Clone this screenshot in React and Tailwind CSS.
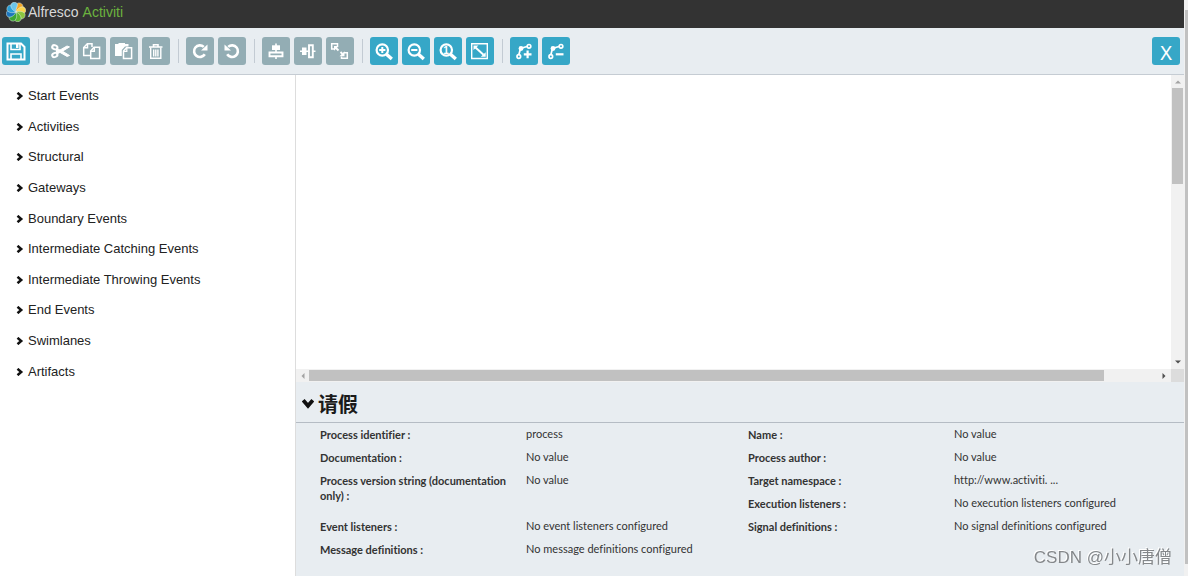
import { useState } from "react";
import clsx from "clsx";

const stencilGroups = [
  "Start Events",
  "Activities",
  "Structural",
  "Gateways",
  "Boundary Events",
  "Intermediate Catching Events",
  "Intermediate Throwing Events",
  "End Events",
  "Swimlanes",
  "Artifacts",
];

const properties = [
  { title: "Process identifier", value: "process" },
  { title: "Name", value: "No value" },
  { title: "Documentation", value: "No value" },
  { title: "Process author", value: "No value" },
  {
    title: "Process version string (documentation only)",
    value: "No value",
    tall: true,
  },
  { title: "Target namespace", value: "http://www.activiti. ..." },
  { title: "Execution listeners", value: "No execution listeners configured" },
  { title: "Event listeners", value: "No event listeners configured" },
  { title: "Signal definitions", value: "No signal definitions configured" },
  { title: "Message definitions", value: "No message definitions configured" },
];

const toolbarGroups = [
  [{ label: "Save", icon: SaveIcon, enabled: true }],
  [
    { label: "Cut", icon: CutIcon },
    { label: "Copy", icon: CopyIcon },
    { label: "Paste", icon: PasteIcon },
    { label: "Delete", icon: TrashIcon },
  ],
  [
    { label: "Redo", icon: RedoIcon },
    { label: "Undo", icon: UndoIcon },
  ],
  [
    { label: "Align vertical", icon: AlignVerticalIcon },
    { label: "Align horizontal", icon: AlignHorizontalIcon },
    { label: "Same size", icon: SameSizeIcon },
  ],
  [
    { label: "Zoom in", icon: ZoomInIcon, enabled: true },
    { label: "Zoom out", icon: ZoomOutIcon, enabled: true },
    { label: "Zoom to actual size", icon: ZoomActualIcon, enabled: true },
    { label: "Zoom to fit", icon: ZoomFitIcon, enabled: true },
  ],
  [
    { label: "Add bend point", icon: AddBendIcon, enabled: true },
    { label: "Remove bend point", icon: RemoveBendIcon, enabled: true },
  ],
];

export default function App() {
  return (
    <div className="flex min-h-screen bg-white font-['Liberation_Sans',Arial,sans-serif] text-[#222]">
      <div className="flex min-w-0 flex-1 flex-col">
        <Header />
        <Toolbar />
        <div className="flex flex-1">
          <StencilPanel />
          <main className="flex min-w-0 flex-1 flex-col border-l border-[#ddd]">
            <Canvas />
            <PropertiesPanel />
          </main>
        </div>
      </div>

      {/* Page scrollbar */}
      <div className="flex w-1 flex-col bg-[#f1f1f1] pt-2.5 pb-3 pl-px">
        <div className="flex-1 bg-[#c1c1c1]" />
      </div>

      <p className="pointer-events-none fixed right-4 bottom-1 font-['Liberation_Sans','Noto_Sans_CJK_SC',sans-serif] text-[17px] leading-7 text-[#85888b] [text-shadow:-1px_-1px_0_#fff]">
        CSDN @小小唐僧
      </p>
    </div>
  );
}

function Header() {
  return (
    <header className="flex h-7 items-center bg-[#333] pb-1 pl-1.5">
      <a href="#" className="flex items-center text-sm leading-5">
        <Logo />
        <span className="ml-0.5 text-[#d8d8d8]">Alfresco</span>
        <span className="ml-1 text-[#6cb33f]">Activiti</span>
      </a>
    </header>
  );
}

function Toolbar() {
  return (
    <div className="flex items-center gap-1 border-b border-[#c5ccd3] bg-[#e8edf1] px-0.5 py-[9px]">
      {toolbarGroups.map((group, index) => (
        <div key={index} className="flex items-center gap-1">
          {index > 0 && (
            <span className="mr-0.5 ml-1 h-6 w-0.5 border-l border-[#c3cbd3]" />
          )}
          {group.map((item) => (
            <ToolButton key={item.label} {...item} />
          ))}
        </div>
      ))}
      <button
        aria-label="Close editor"
        className="mr-0.5 ml-auto h-7 w-7 rounded-[3px] bg-[#36a7c7] pt-1 font-['Noto_Sans',sans-serif] text-xl leading-6 text-white"
      >
        X
      </button>
    </div>
  );
}

function ToolButton({ label, icon: Icon, enabled = false }) {
  return (
    <button
      aria-label={label}
      title={label}
      disabled={!enabled}
      className={clsx(
        "h-7 w-7 rounded-[3px] text-white",
        enabled ? "bg-[#36a7c7] hover:bg-[#2b93b1]" : "bg-[#93adb4]"
      )}
    >
      <Icon />
    </button>
  );
}

function StencilPanel() {
  return (
    <nav className="w-[295px] shrink-0 pt-1.5 pl-4">
      <ul className="grid h-[306px] auto-rows-fr">
        {stencilGroups.map((name) => (
          <li key={name} className="flex items-center">
            <button className="flex items-center gap-1 text-[13px] leading-5">
              <Chevron className="h-2 w-2" />
              {name}
            </button>
          </li>
        ))}
      </ul>
    </nav>
  );
}

function Canvas() {
  return (
    <section className="flex flex-1 flex-col" aria-label="Canvas">
      <div className="flex flex-1">
        <div className="flex-1" />
        <div className="flex w-[13px] flex-col items-center bg-[#f1f1f1] py-1">
          <ScrollArrow className="text-[#a3a3a3]" />
          <div className="mt-[3px] h-24 w-[11px] bg-[#c1c1c1]" />
          <ScrollArrow className="mt-auto rotate-180 text-[#505050]" />
        </div>
      </div>
      <div className="flex h-[13px] bg-[#f1f1f1]">
        <div className="flex flex-1 items-center px-1">
          <ScrollArrow className="-rotate-90 text-[#a3a3a3]" />
          <div className="ml-[3px] h-[11px] w-11/12 bg-[#c1c1c1]" />
          <ScrollArrow className="ml-auto rotate-90 text-[#505050]" />
        </div>
        <div className="w-[13px] bg-[#dcdcdc]" />
      </div>
    </section>
  );
}

function PropertiesPanel() {
  const [open, setOpen] = useState(true);

  return (
    <section className="bg-[#e8edf1] font-[Lato,'Noto_Sans_CJK_SC',sans-serif] [font-variant-ligatures:none]">
      <h2 className="border-b border-[#b5bcc4]">
        <button
          onClick={() => setOpen((o) => !o)}
          aria-expanded={open}
          className="flex h-10 items-center gap-1 pt-1 pl-1.5 text-xl leading-7 font-bold text-[#1a1a1a]"
        >
          <Chevron className={clsx("h-3 w-3", open && "rotate-90")} />
          请假
        </button>
      </h2>
      {open && (
        <dl className="grid h-[153px] auto-rows-[23px] grid-cols-2 pt-[3px] pr-2 pl-6 text-[11px] leading-[15px] text-[#333]">
          {properties.map(({ title, value, tall }) => (
            <div key={title} className={clsx("flex", tall && "row-span-2")}>
              <dt className="w-[206px] shrink-0 pt-px font-bold">{`${title} :`}</dt>
              <dd>{value}</dd>
            </div>
          ))}
        </dl>
      )}
    </section>
  );
}

function Chevron({ className }) {
  return (
    <svg viewBox="0 0 8 8" className={className} fill="none" stroke="#111" strokeWidth="2.500">
      <path d="M1.500 0.800 5.200 4 1.500 7.200" />
    </svg>
  );
}

function ScrollArrow({ className }) {
  return (
    <svg viewBox="0 0 6 6" className={clsx("h-1.5 w-1.5 shrink-0", className)} fill="currentColor">
      <path d="M3 1.500 6 4.500H0Z" />
    </svg>
  );
}

function Logo() {
  const petals = [
    "#f5a623",
    "#fbd44b",
    "#8cc63f",
    "#5cb531",
    "#3aa535",
    "#1b75bc",
    "#2a9fd8",
    "#6cc5e9",
  ];
  return (
    <svg viewBox="0 0 20 20" className="h-5 w-5">
      {petals.map((color, i) => (
        <path
          key={color}
          d="M10 10C8.500 6.500 9.500 1.500 12.500 0.900C16 0.800 17.500 3.500 16.500 5.500C15 7.500 11.500 7.500 10 10Z"
          fill={color}
          stroke="#e6efe9"
          strokeWidth="0.500"
          transform={`rotate(${i * 45} 10 10)`}
        />
      ))}
    </svg>
  );
}

function Glyph({ children }) {
  return (
    <svg viewBox="0 0 28 28" className="h-7 w-7" fill="none" stroke="currentColor" strokeWidth="2">
      {children}
    </svg>
  );
}

function SaveIcon() {
  return (
    <Glyph>
      <path d="M5.500 6.500H19L22.500 10V22.500H5.500Z" />
      <path d="M9 6.500V12.500H18V6.500M9 22V17H19V22" strokeWidth="1.600" />
      <path d="M14 7H16.500V11H14Z" fill="currentColor" stroke="none" />
    </Glyph>
  );
}

function CutIcon() {
  return (
    <Glyph>
      <ellipse cx="8.800" cy="10.300" rx="2.700" ry="2" transform="rotate(20 8.800 10.300)" />
      <ellipse cx="8.800" cy="18" rx="2.700" ry="2" transform="rotate(-20 8.800 18)" />
      <path d="M10.500 11.200 14 13 21 9 23.500 9.900 16.500 14.200 23.500 18.500 21 19.400 14 15.400 10.500 17.200Z" fill="currentColor" strokeWidth="1" />
    </Glyph>
  );
}

function CopyIcon() {
  return (
    <Glyph>
      <g strokeWidth="1.500">
        <path d="M12.500 18.500H5.700V10.500L9.300 6.700H14V10" />
        <path d="M9.500 7V10.700H6" />
        <path d="M12.700 14 16 10.200H21.600V21.600H12.700Z" />
        <path d="M16.300 10.500V14.200H13" />
      </g>
    </Glyph>
  );
}

function PasteIcon() {
  return (
    <Glyph>
      <path d="M5 7H8.500V6H15V7H18.500V9.500H15L11.800 13V19H5Z" fill="currentColor" stroke="none" />
      <path d="M13.500 14 16.500 10.700H21.600V21.600H13.500Z" strokeWidth="1.500" />
      <path d="M16.800 10.800V14.300H13.800" strokeWidth="1.300" />
    </Glyph>
  );
}

function TrashIcon() {
  return (
    <Glyph>
      <path d="M7 10H20.500M11.500 9.500V7.700H16V9.500" strokeWidth="1.600" />
      <path d="M8.700 10.500V21.300H18.800V10.500M11.700 12.500V19.500M13.800 12.500V19.500M15.900 12.500V19.500" strokeWidth="1.400" />
    </Glyph>
  );
}

function RedoIcon() {
  return (
    <Glyph>
      <path d="M18.800 17.300A5.800 5.800 0 1 1 17.800 9.900" strokeWidth="2.600" />
      <path d="M21.500 7.500V13.500H15Z" fill="currentColor" stroke="none" />
    </Glyph>
  );
}

function UndoIcon() {
  return (
    <Glyph>
      <path d="M9.200 17.300A5.800 5.800 0 1 0 10.200 9.900" strokeWidth="2.600" />
      <path d="M6.500 7.500V13.500H13Z" fill="currentColor" stroke="none" />
    </Glyph>
  );
}

function AlignVerticalIcon() {
  return (
    <Glyph>
      <path d="M10 8.300H18V13H10Z" fill="currentColor" stroke="none" />
      <path d="M14 6.500V15M14 20V22" strokeWidth="1.600" />
      <path d="M7.500 15.500H20.500V19.300H7.500Z" strokeWidth="1.900" />
    </Glyph>
  );
}

function AlignHorizontalIcon() {
  return (
    <Glyph>
      <path d="M8 10.500H12.500V18H8Z" fill="currentColor" stroke="none" />
      <path d="M6 14.300H15M19 14.300H21.500" strokeWidth="1.600" />
      <path d="M15 8.300H18.800V20.300H15Z" strokeWidth="1.900" />
    </Glyph>
  );
}

function SameSizeIcon() {
  return (
    <Glyph>
      <g strokeWidth="1.500">
        <path d="M8.500 12H5.700V6.700H11.500V9" />
        <path d="M18 15.700H21.300V21.300H15.500V19.500" />
        <path d="M9.500 10.500 12.500 13.500M14.500 15 16.500 17" strokeWidth="1.800" />
      </g>
      <path d="M8 9H12.800L8 13.800ZM18.500 14.200V19.200H13.500Z" fill="currentColor" stroke="none" />
    </Glyph>
  );
}

function Magnifier({ children }) {
  return (
    <Glyph>
      <circle cx="12.300" cy="13" r="5.700" strokeWidth="2.200" />
      <path d="M16.500 17.200 21.800 22" strokeWidth="3.400" />
      {children}
    </Glyph>
  );
}

function ZoomInIcon() {
  return (
    <Magnifier>
      <path d="M9.200 13H15.400M12.300 10V16" strokeWidth="2" />
    </Magnifier>
  );
}

function ZoomOutIcon() {
  return (
    <Magnifier>
      <path d="M9.200 13H15.400" strokeWidth="2" />
    </Magnifier>
  );
}

function ZoomActualIcon() {
  return (
    <Magnifier>
      <text x="12" y="16.500" textAnchor="middle" fontSize="10" fontWeight="bold" fill="currentColor" stroke="none">
        1
      </text>
    </Magnifier>
  );
}

function ZoomFitIcon() {
  return (
    <Glyph>
      <path d="M5.700 6.700H21.300V21.500H5.700Z" strokeWidth="1.400" />
      <path d="M9.500 10.500 17.500 17.800" strokeWidth="2" />
      <path d="M7.500 8.500H12.500L7.500 13ZM19.700 19.700H14.800L19.700 15.200Z" fill="currentColor" stroke="none" />
    </Glyph>
  );
}

function BendPath({ children }) {
  return (
    <Glyph>
      <g strokeWidth="1.700">
        <path d="M8.800 18 10.500 11.500 17 9.500" />
        <circle cx="8.800" cy="19.500" r="1.800" />
        <circle cx="19" cy="9.300" r="1.800" />
      </g>
      <circle cx="11" cy="11.500" r="2.400" fill="currentColor" stroke="none" />
      {children}
    </Glyph>
  );
}

function AddBendIcon() {
  return (
    <BendPath>
      <path d="M13.800 17.300H21.500M17.600 13.500V21.200" strokeWidth="2.200" />
    </BendPath>
  );
}

function RemoveBendIcon() {
  return (
    <BendPath>
      <path d="M13.800 17.300H21.500" strokeWidth="2.200" />
    </BendPath>
  );
}
